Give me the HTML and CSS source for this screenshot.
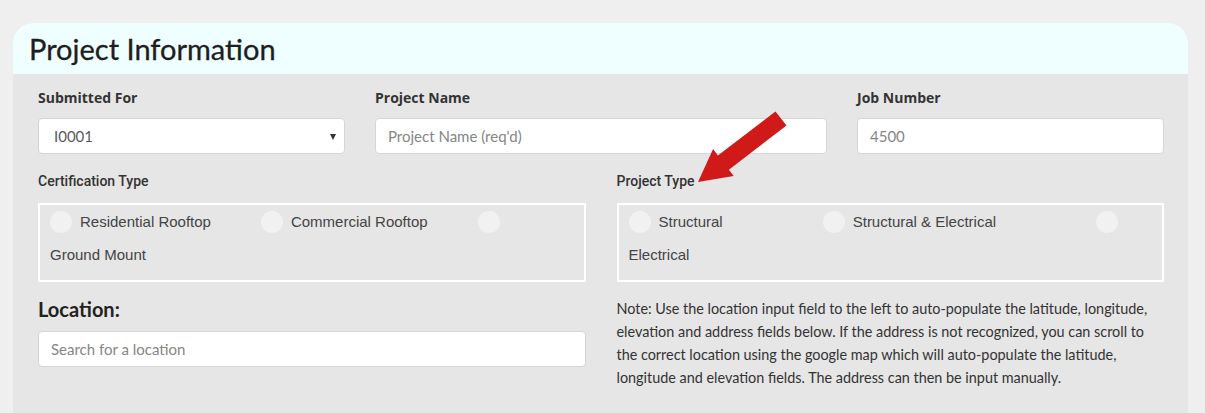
FILE: index.html
```html
<!DOCTYPE html>
<html>
<head>
<meta charset="UTF-8">
  <title>Project Information</title>
  <link rel="stylesheet" href="styles.css">
</head>
<body>
  <div class="page">
    <div class="card">
      <div class="card-head">
        <h1>Project Information</h1>
      </div>

      <div class="card-body">
        <div class="row row-top">
          <div class="field">
            <label class="lbl" for="submittedFor">Submitted For</label>
            <div class="select-wrap">
              <select id="submittedFor" class="ctl ctl-select">
                <option>I0001</option>
              </select>
            </div>
          </div>
          <div class="field">
            <label class="lbl" for="projectName">Project Name</label>
            <input type="text" id="projectName" class="ctl" placeholder="Project Name (req'd)">
          </div>
          <div class="field">
            <label class="lbl" for="jobNumber">Job Number</label>
            <input type="text" id="jobNumber" class="ctl" placeholder="4500">
          </div>
        </div>

        <div class="row row-half">
          <div class="field">
            <div class="lbl-sm">Certification Type</div>
            <div class="opt-box">
              <input type="radio" name="cert" class="radio" id="certRes">
              <label class="opt" for="certRes">Residential Rooftop</label>
              <input type="radio" name="cert" class="radio" id="certCom">
              <label class="opt" for="certCom">Commercial Rooftop</label>
              <input type="radio" name="cert" class="radio" id="certGround">
              <label class="opt" for="certGround">Ground Mount</label>
            </div>
          </div>
          <div class="field">
            <div class="lbl-sm">Project Type</div>
            <div class="opt-box opt-box-wide">
              <input type="radio" name="ptype" class="radio" id="ptStruct">
              <label class="opt" for="ptStruct">Structural</label>
              <input type="radio" name="ptype" class="radio" id="ptBoth">
              <label class="opt" for="ptBoth">Structural &amp; Electrical</label>
              <input type="radio" name="ptype" class="radio" id="ptElec">
              <label class="opt" for="ptElec">Electrical</label>
            </div>
          </div>
        </div>

        <div class="row row-half row-loc">
          <div class="field">
            <h2 class="loc-title">Location:</h2>
            <input type="text" class="ctl" placeholder="Search for a location">
          </div>
          <p class="note">Note: Use the location input field to the left to auto-populate the latitude, longitude, elevation and address fields below. If the address is not recognized, you can scroll to the correct location using the google map which will auto-populate the latitude, longitude and elevation fields. The address can then be input manually.</p>
        </div>
      </div>
    </div>

    <!-- annotation arrow pointing at Project Type -->
    <svg class="arrow" width="110" height="90" viewBox="0 0 110 90">
      <polygon points="85.5,11.4 96.5,25.6 38.9,69.7 43.7,76.1 8,82 23.1,49.1 27.9,55.5" fill="#d01a1a"/>
    </svg>
  </div>
</body>
</html>
```

FILE: styles.css
```css
body {
  margin: 0;
  background-color: #efefef;
  font-family: Lato, 'Open Sans', sans-serif;
  color: #333;
}

.page {
  position: relative;
  padding-top: 23px;
  height: 390px;
  overflow: hidden;
}

.card {
  margin: 0 17px 0 13px;
  background-color: #e6e6e6;
  border-radius: 20px 20px 0 0;
  overflow: hidden;
  min-height: 400px;
}

.card-head {
  background-color: #effefe;
  padding: 0 16px;
}

.card-head h1 {
  margin: 0;
  font-size: 29px;
  font-weight: 400;
  line-height: 51px;
  color: #1e1e1e;
  -webkit-text-stroke: 0.3px #1e1e1e;
}

.card-body {
  padding: 14px 24px 20px 25px;
}

.row {
  display: grid;
}

.row-top {
  grid-template-columns: 307px 452px 1fr;
  column-gap: 30px;
  margin-bottom: 18px;
}

.row-half {
  grid-template-columns: 1fr 1fr;
  column-gap: 31px;
}

.row-loc {
  margin-top: 15px;
}

.lbl {
  display: block;
  font-family: 'Open Sans', Lato, sans-serif;
  font-size: 14px;
  font-weight: 700;
  line-height: 20px;
  margin-bottom: 10px;
  color: #333;
}

.lbl-sm {
  font-family: Roboto, 'Liberation Sans', sans-serif;
  font-size: 14px;
  font-weight: 500;
  line-height: 18px;
  margin-bottom: 13px;
  color: #333;
}

.ctl {
  display: block;
  width: 100%;
  height: 36px;
  box-sizing: border-box;
  padding: 0 12px;
  border: 1px solid #d6d6d6;
  border-radius: 4px;
  background-color: #fff;
  font-family: Lato, 'Open Sans', sans-serif;
  font-size: 15px;
  color: #555;
  outline: none;
}

.ctl::placeholder {
  color: #868686;
}

.select-wrap {
  position: relative;
}

.ctl-select {
  appearance: none;
  -webkit-appearance: none;
  padding-left: 15px;
  color: #5a5a5a;
}

.select-wrap::after {
  content: "";
  position: absolute;
  right: 9px;
  top: 16px;
  border-left: 3.5px solid transparent;
  border-right: 3.5px solid transparent;
  border-top: 6px solid #333;
  pointer-events: none;
}

.opt-box {
  display: flex;
  flex-wrap: wrap;
  align-items: center;
  row-gap: 11px;
  border: 2px solid #fff;
  padding: 6px 10px 14px;
}

.radio {
  appearance: none;
  -webkit-appearance: none;
  width: 22px;
  height: 22px;
  margin: 0 8px 0 0;
  border-radius: 50%;
  background-color: #f1f1f1;
}

.opt {
  font-family: 'Liberation Sans', Arial, sans-serif;
  font-size: 15px;
  line-height: 22px;
  color: #444;
  margin-right: 50px;
}

.opt-box-wide .opt {
  margin-right: 100px;
}

.loc-title {
  margin: 0 0 10px;
  font-size: 20px;
  font-weight: 700;
  line-height: 24px;
  color: #222;
}

.note {
  margin: 0;
  font-size: 14.4px;
  line-height: 23px;
  color: #333;
}

.arrow {
  position: absolute;
  left: 690px;
  top: 100px;
}
```
